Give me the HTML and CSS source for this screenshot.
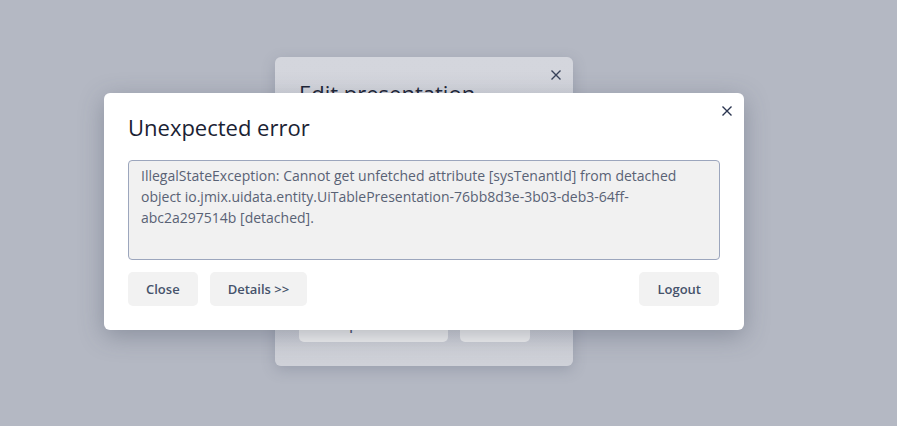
FILE: index.html
```html
<!DOCTYPE html>
<html lang="en">
<head>
    <meta charset="UTF-8">
    <meta name="viewport" content="width=device-width, initial-scale=1.0">
    <title>Unexpected error</title>
    <link rel="stylesheet" href="styles.css">
</head>
<body>
    <div class="backdrop">
        <!-- dialog behind the overlay -->
        <div class="window edit-window">
            <button class="close-x dim" aria-label="Close">
                <svg width="12" height="12" viewBox="0 0 12 12"><path d="M1.5 1.5 L10.5 10.5 M10.5 1.5 L1.5 10.5" stroke="currentColor" stroke-width="1.4" fill="none"/></svg>
            </button>
            <h2 class="edit-title">Edit presentation</h2>
            <div class="edit-body"></div>
            <div class="edit-buttons">
                <span class="btn dim-btn save-btn">Save presentation</span>
                <span class="btn dim-btn">Close</span>
            </div>
        </div>

        <div class="window error-window">
            <button class="close-x" aria-label="Close">
                <svg width="12" height="12" viewBox="0 0 12 12"><path d="M1.5 1.5 L10.5 10.5 M10.5 1.5 L1.5 10.5" stroke="currentColor" stroke-width="1.4" fill="none"/></svg>
            </button>
            <h2 class="error-title">Unexpected error</h2>
            <div class="message">IllegalStateException: Cannot get unfetched attribute [sysTenantId] from detached object io.jmix.uidata.entity.UiTablePresentation-76bb8d3e-3b03-deb3-64ff-abc2a297514b [detached].</div>
            <div class="buttons">
                <span class="btn">Close</span>
                <span class="btn">Details &gt;&gt;</span>
                <span class="spacer"></span>
                <span class="btn">Logout</span>
            </div>
        </div>
    </div>
</body>
</html>
```

FILE: styles.css
```css
html, body {
    margin: 0;
    height: 100%;
}
body {
    font-family: "Open Sans", "Noto Sans", sans-serif;
    background-color: #b4b8c3;
    overflow: hidden;
}
.backdrop {
    position: relative;
    width: 897px;
    height: 426px;
}
.window {
    position: absolute;
    box-sizing: border-box;
    border-radius: 6px;
}
.edit-window {
    left: 275px;
    top: 57px;
    width: 298px;
    height: 309px;
    background: linear-gradient(#d4d6dd, #cfd1d8);
    box-shadow: 0 4px 14px rgba(80, 88, 110, 0.25);
    padding: 22px 24px 24px;
    display: flex;
    flex-direction: column;
}
.edit-title {
    margin: 0;
    font-size: 22px;
    font-weight: 500;
    color: #1c2436;
    line-height: 1.3;
}
.edit-body {
    flex: 1;
}
.edit-buttons {
    display: flex;
    gap: 12px;
}
.dim-btn {
    background-color: #b5b8c1;
    color: #4a5266;
}
.save-btn {
    width: 149px;
    box-sizing: border-box;
}
.close-x {
    position: absolute;
    top: 12px;
    right: 11px;
    border: none;
    background: none;
    padding: 0;
    color: #2a3550;
    width: 12px;
    height: 12px;
    display: flex;
}
.close-x.dim {
    color: #38425a;
}
.error-window {
    left: 104px;
    top: 93px;
    width: 640px;
    height: 237px;
    background-color: #fff;
    box-shadow: 0 6px 24px rgba(60, 68, 90, 0.35);
    padding: 19px 24px 24px;
}
.error-title {
    margin: 0 0 18px;
    font-size: 22px;
    font-weight: 500;
    color: #1a2233;
    line-height: 30px;
}
.message {
    box-sizing: border-box;
    height: 100px;
    background-color: #f1f1f1;
    border: 1px solid #9ca6bd;
    border-radius: 4px;
    padding: 4px 12px;
    font-size: 14px;
    line-height: 21px;
    color: #596275;
}
.buttons {
    display: flex;
    gap: 12px;
    margin-top: 12px;
    padding-right: 1px;
}
.spacer {
    flex: 1;
}
.btn {
    display: inline-flex;
    align-items: center;
    justify-content: center;
    height: 34px;
    padding: 0 18px;
    border-radius: 5px;
    background-color: #f2f2f2;
    color: #46526b;
    font-size: 13px;
    font-weight: 600;
    white-space: nowrap;
}
```
